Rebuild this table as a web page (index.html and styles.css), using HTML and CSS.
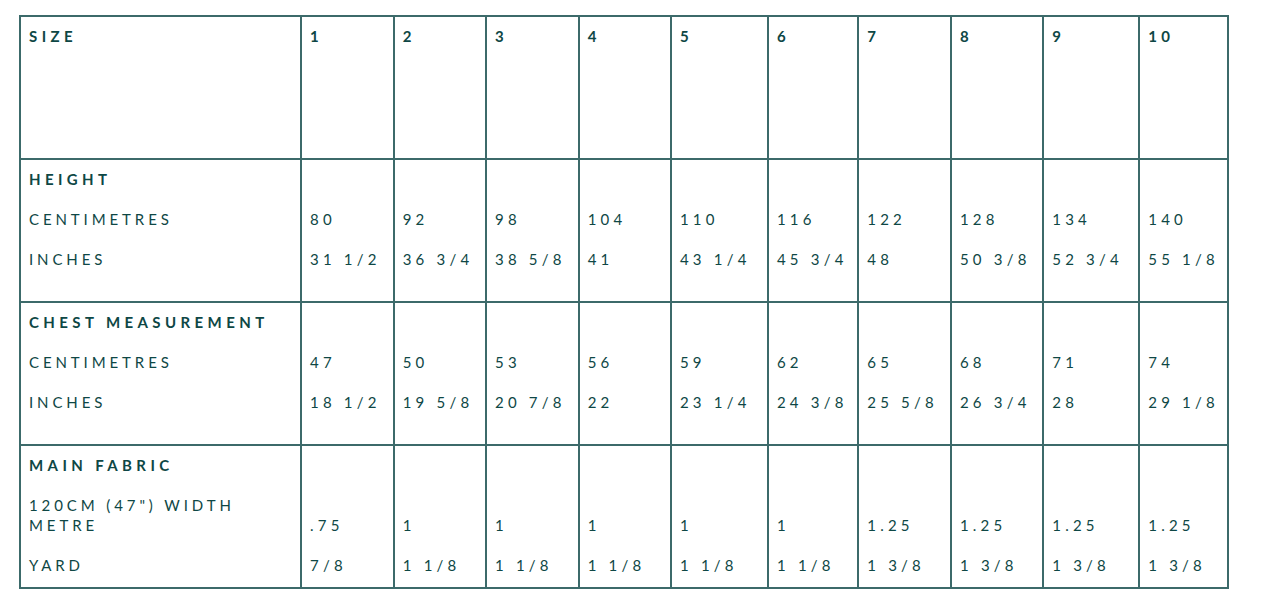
FILE: index.html
```html
<!DOCTYPE html>
<html lang="en">
<head>
<meta charset="utf-8">
<title>Size chart</title>
<link rel="stylesheet" href="styles.css">
</head>
<body>
<div class="page">
<table class="chart">
  <colgroup>
    <col class="c-label">
    <col class="c-93"><col class="c-92"><col class="c-93"><col class="c-92">
    <col class="c-97"><col class="c-90"><col class="c-93"><col class="c-92">
    <col class="c-96"><col class="c-89">
  </colgroup>
  <tr>
    <td><div class="ln hd">SIZE</div></td>
    <td><div class="ln hd">1</div></td>
    <td><div class="ln hd">2</div></td>
    <td><div class="ln hd">3</div></td>
    <td><div class="ln hd">4</div></td>
    <td><div class="ln hd">5</div></td>
    <td><div class="ln hd">6</div></td>
    <td><div class="ln hd">7</div></td>
    <td><div class="ln hd">8</div></td>
    <td><div class="ln hd">9</div></td>
    <td><div class="ln hd">10</div></td>
  </tr>
  <tr>
    <td class="lbl"><div class="ln hd">HEIGHT</div><div class="ln gap">CENTIMETRES</div><div class="ln gap">INCHES</div></td>
    <td><div class="ln"></div><div class="ln gap">80</div><div class="ln gap">31 1/2</div></td>
    <td><div class="ln"></div><div class="ln gap">92</div><div class="ln gap">36 3/4</div></td>
    <td><div class="ln"></div><div class="ln gap">98</div><div class="ln gap">38 5/8</div></td>
    <td><div class="ln"></div><div class="ln gap">104</div><div class="ln gap">41</div></td>
    <td><div class="ln"></div><div class="ln gap">110</div><div class="ln gap">43 1/4</div></td>
    <td><div class="ln"></div><div class="ln gap">116</div><div class="ln gap">45 3/4</div></td>
    <td><div class="ln"></div><div class="ln gap">122</div><div class="ln gap">48</div></td>
    <td><div class="ln"></div><div class="ln gap">128</div><div class="ln gap">50 3/8</div></td>
    <td><div class="ln"></div><div class="ln gap">134</div><div class="ln gap">52 3/4</div></td>
    <td><div class="ln"></div><div class="ln gap">140</div><div class="ln gap">55 1/8</div></td>
  </tr>
  <tr>
    <td class="lbl"><div class="ln hd">CHEST MEASUREMENT</div><div class="ln gap">CENTIMETRES</div><div class="ln gap">INCHES</div></td>
    <td><div class="ln"></div><div class="ln gap">47</div><div class="ln gap">18 1/2</div></td>
    <td><div class="ln"></div><div class="ln gap">50</div><div class="ln gap">19 5/8</div></td>
    <td><div class="ln"></div><div class="ln gap">53</div><div class="ln gap">20 7/8</div></td>
    <td><div class="ln"></div><div class="ln gap">56</div><div class="ln gap">22</div></td>
    <td><div class="ln"></div><div class="ln gap">59</div><div class="ln gap">23 1/4</div></td>
    <td><div class="ln"></div><div class="ln gap">62</div><div class="ln gap">24 3/8</div></td>
    <td><div class="ln"></div><div class="ln gap">65</div><div class="ln gap">25 5/8</div></td>
    <td><div class="ln"></div><div class="ln gap">68</div><div class="ln gap">26 3/4</div></td>
    <td><div class="ln"></div><div class="ln gap">71</div><div class="ln gap">28</div></td>
    <td><div class="ln"></div><div class="ln gap">74</div><div class="ln gap">29 1/8</div></td>
  </tr>
  <tr>
    <td class="lbl"><div class="ln hd">MAIN FABRIC</div><div class="ln gap">120CM (47") WIDTH</div><div class="ln">METRE</div><div class="ln gap">YARD</div></td>
    <td><div class="ln"></div><div class="ln gap"></div><div class="ln">.75</div><div class="ln gap">7/8</div></td>
    <td><div class="ln"></div><div class="ln gap"></div><div class="ln">1</div><div class="ln gap">1 1/8</div></td>
    <td><div class="ln"></div><div class="ln gap"></div><div class="ln">1</div><div class="ln gap">1 1/8</div></td>
    <td><div class="ln"></div><div class="ln gap"></div><div class="ln">1</div><div class="ln gap">1 1/8</div></td>
    <td><div class="ln"></div><div class="ln gap"></div><div class="ln">1</div><div class="ln gap">1 1/8</div></td>
    <td><div class="ln"></div><div class="ln gap"></div><div class="ln">1</div><div class="ln gap">1 1/8</div></td>
    <td><div class="ln"></div><div class="ln gap"></div><div class="ln">1.25</div><div class="ln gap">1 3/8</div></td>
    <td><div class="ln"></div><div class="ln gap"></div><div class="ln">1.25</div><div class="ln gap">1 3/8</div></td>
    <td><div class="ln"></div><div class="ln gap"></div><div class="ln">1.25</div><div class="ln gap">1 3/8</div></td>
    <td><div class="ln"></div><div class="ln gap"></div><div class="ln">1.25</div><div class="ln gap">1 3/8</div></td>
  </tr>
</table>
</div>
</body>
</html>
```

FILE: styles.css
```css
html, body {
  margin: 0;
  padding: 0;
  background: #ffffff;
}

.page {
  padding: 15px 0 0 19px;
}

.chart {
  border-collapse: collapse;
  table-layout: fixed;
  width: 1210px;
  font-family: Lato, "Liberation Sans", sans-serif;
  font-size: 15px;
  font-weight: 400;
  color: #0e4745;
}

.c-label { width: 281px; }
.c-93 { width: 92.7px; }
.c-92 { width: 92.3px; }
.c-97 { width: 97px; }
.c-90 { width: 90.3px; }
.c-96 { width: 96px; }
.c-89 { width: 88.7px; }

.chart tr {
  height: 143px;
}

.chart td {
  border: 2px solid #3c6a6a;
  vertical-align: top;
  padding: 9px 2px 0 8px;
  white-space: pre;
}

.ln {
  height: 20px;
  line-height: 20px;
  letter-spacing: 4.2px;
}

.lbl .ln {
  letter-spacing: 3.9px;
}

.ln.gap {
  margin-top: 20px;
}

.chart .hd {
  font-weight: 700;
  letter-spacing: 4.4px;
}
```
